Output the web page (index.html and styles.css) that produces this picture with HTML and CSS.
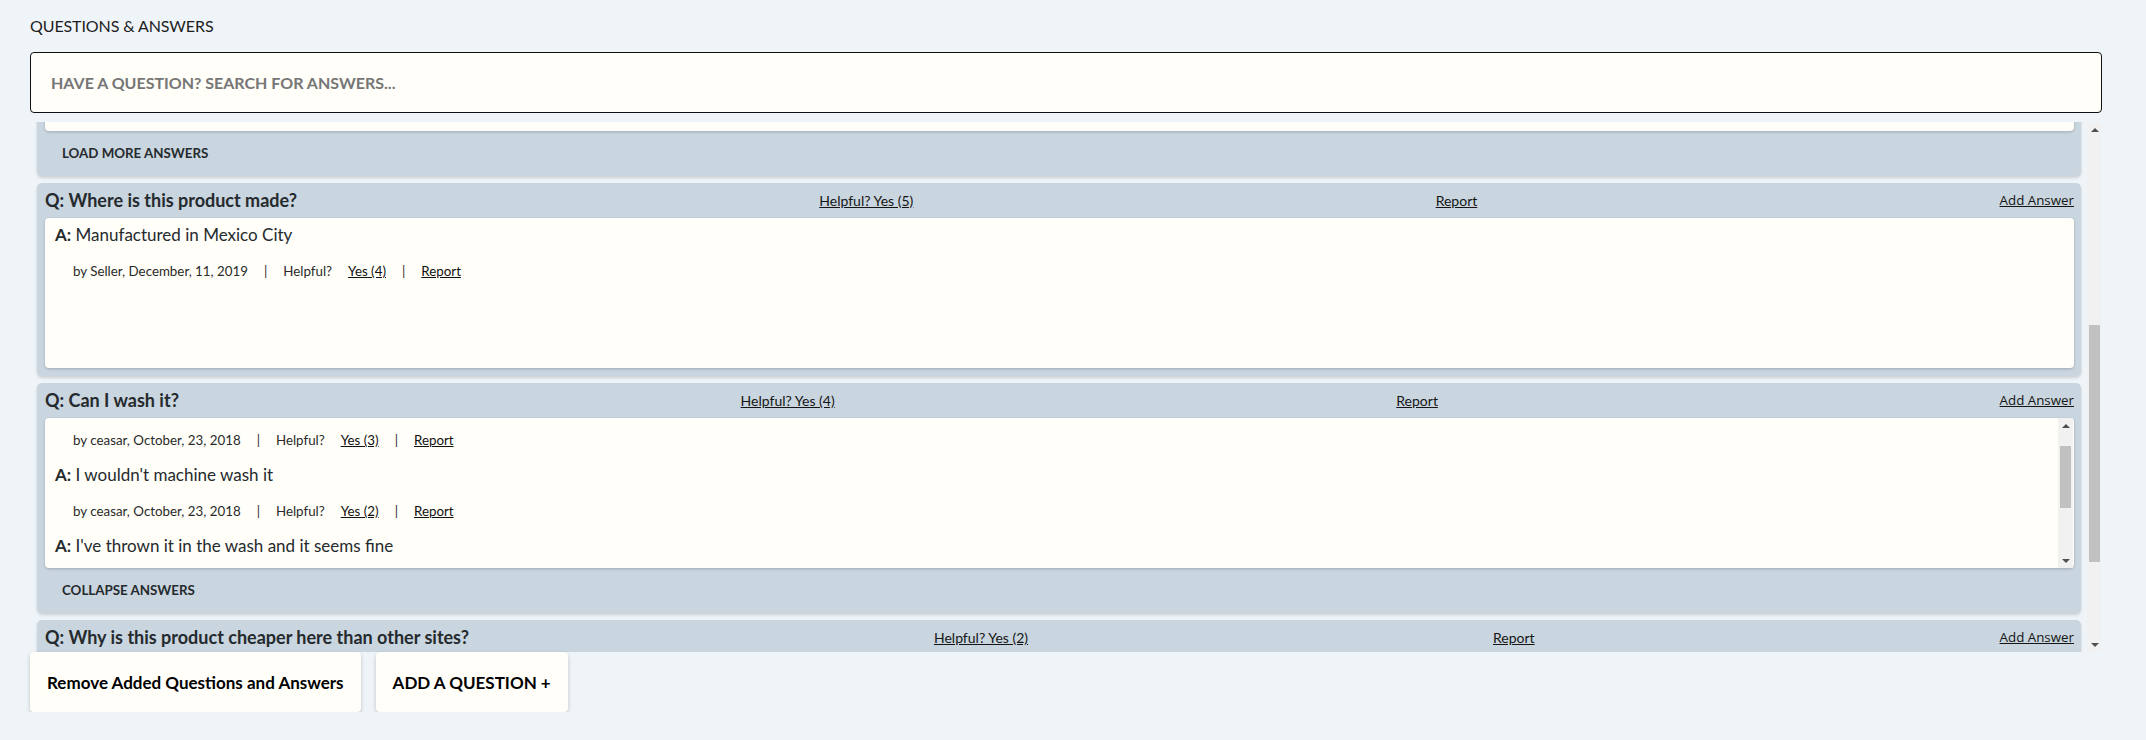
FILE: index.html
```html
<!DOCTYPE html>
<html>
<head>
    <meta charset="UTF-8">
    <title>Questions &amp; Answers</title>
    <link rel="stylesheet" href="styles.css">
</head>
<body>
    <div class="qa">
        <h2 class="qa-title">QUESTIONS &amp; ANSWERS</h2>
        <input class="qa-search" type="text" placeholder="HAVE A QUESTION? SEARCH FOR ANSWERS...">

        <div class="list-wrap">
            <div class="qa-list" id="qaList">
                <div class="question">
                    <div class="q-head">
                        <span class="q-text">Q: Does this run true to size?</span>
                        <a href="javascript:;" class="q-link">Helpful? Yes (9)</a>
                        <a href="javascript:;" class="q-link">Report</a>
                        <button class="add-answer">Add Answer</button>
                    </div>
                    <div class="answers">
                        <div class="answers-scroll">
                            <div class="answer">
                                <p class="a-body"><b>A:</b> Yes, I ordered my usual size and it fits well</p>
                                <div class="a-meta">
                                    <span>by dana, March, 2, 2019</span><span>|</span><span>Helpful?</span>
                                    <a href="javascript:;">Yes (6)</a><span>|</span><a href="javascript:;">Report</a>
                                </div>
                            </div>
                            <div class="answer">
                                <p class="a-body"><b>A:</b> It runs a little small around the shoulders</p>
                                <div class="a-meta">
                                    <span>by jon22, February, 14, 2019</span><span>|</span><span>Helpful?</span>
                                    <a href="javascript:;">Yes (3)</a><span>|</span><a href="javascript:;">Report</a>
                                </div>
                            </div>
                        </div>
                    </div>
                    <button class="more">LOAD MORE ANSWERS</button>
                </div>

                <div class="question">
                    <div class="q-head">
                        <span class="q-text">Q: How long does shipping take?</span>
                        <a href="javascript:;" class="q-link">Helpful? Yes (7)</a>
                        <a href="javascript:;" class="q-link">Report</a>
                        <button class="add-answer">Add Answer</button>
                    </div>
                    <div class="answers">
                        <div class="answers-scroll">
                            <div class="answer">
                                <p class="a-body"><b>A:</b> Mine arrived in three days</p>
                                <div class="a-meta">
                                    <span>by Seller, January, 8, 2019</span><span>|</span><span>Helpful?</span>
                                    <a href="javascript:;">Yes (5)</a><span>|</span><a href="javascript:;">Report</a>
                                </div>
                            </div>
                            <div class="answer">
                                <p class="a-body"><b>A:</b> About a week for me</p>
                                <div class="a-meta">
                                    <span>by mira, December, 30, 2018</span><span>|</span><span>Helpful?</span>
                                    <a href="javascript:;">Yes (1)</a><span>|</span><a href="javascript:;">Report</a>
                                </div>
                            </div>
                        </div>
                    </div>
                    <button class="more">LOAD MORE ANSWERS</button>
                </div>

                <div class="question">
                    <div class="q-head">
                        <span class="q-text">Q: Where is this product made?</span>
                        <a href="javascript:;" class="q-link">Helpful? Yes (5)</a>
                        <a href="javascript:;" class="q-link">Report</a>
                        <button class="add-answer">Add Answer</button>
                    </div>
                    <div class="answers">
                        <div class="answers-scroll">
                            <div class="answer">
                                <p class="a-body"><b>A:</b> Manufactured in Mexico City</p>
                                <div class="a-meta">
                                    <span>by Seller, December, 11, 2019</span><span>|</span><span>Helpful?</span>
                                    <a href="javascript:;">Yes (4)</a><span>|</span><a href="javascript:;">Report</a>
                                </div>
                            </div>
                        </div>
                    </div>
                </div>

                <div class="question">
                    <div class="q-head">
                        <span class="q-text">Q: Can I wash it?</span>
                        <a href="javascript:;" class="q-link">Helpful? Yes (4)</a>
                        <a href="javascript:;" class="q-link">Report</a>
                        <button class="add-answer">Add Answer</button>
                    </div>
                    <div class="answers">
                        <div class="answers-scroll" id="washAnswers">
                            <div class="answer">
                                <p class="a-body"><b>A:</b> Yes, cold water only</p>
                                <div class="a-meta">
                                    <span>by ceasar, October, 23, 2018</span><span>|</span><span>Helpful?</span>
                                    <a href="javascript:;">Yes (3)</a><span>|</span><a href="javascript:;">Report</a>
                                </div>
                            </div>
                            <div class="answer">
                                <p class="a-body"><b>A:</b> I wouldn't machine wash it</p>
                                <div class="a-meta">
                                    <span>by ceasar, October, 23, 2018</span><span>|</span><span>Helpful?</span>
                                    <a href="javascript:;">Yes (2)</a><span>|</span><a href="javascript:;">Report</a>
                                </div>
                            </div>
                            <div class="answer">
                                <p class="a-body"><b>A:</b> I've thrown it in the wash and it seems fine</p>
                                <div class="a-meta">
                                    <span>by ceasar, October, 23, 2018</span><span>|</span><span>Helpful?</span>
                                    <a href="javascript:;">Yes (1)</a><span>|</span><a href="javascript:;">Report</a>
                                </div>
                            </div>
                            <div class="answer">
                                <p class="a-body"><b>A:</b> Hand wash and hang it up to dry</p>
                                <div class="a-meta">
                                    <span>by ceasar, October, 23, 2018</span><span>|</span><span>Helpful?</span>
                                    <a href="javascript:;">Yes (0)</a><span>|</span><a href="javascript:;">Report</a>
                                </div>
                            </div>
                        </div>
                        <div class="scrollbar" id="washBar">
                            <span class="sb-btn up"></span>
                            <div class="sb-track"><div class="sb-thumb"></div></div>
                            <span class="sb-btn down"></span>
                        </div>
                    </div>
                    <button class="more">COLLAPSE ANSWERS</button>
                </div>

                <div class="question">
                    <div class="q-head">
                        <span class="q-text">Q: Why is this product cheaper here than other sites?</span>
                        <a href="javascript:;" class="q-link">Helpful? Yes (2)</a>
                        <a href="javascript:;" class="q-link">Report</a>
                        <button class="add-answer">Add Answer</button>
                    </div>
                    <div class="answers">
                        <div class="answers-scroll">
                            <div class="answer">
                                <p class="a-body"><b>A:</b> We are selling it at a discount this month</p>
                                <div class="a-meta">
                                    <span>by Seller, November, 2, 2018</span><span>|</span><span>Helpful?</span>
                                    <a href="javascript:;">Yes (2)</a><span>|</span><a href="javascript:;">Report</a>
                                </div>
                            </div>
                        </div>
                    </div>
                </div>
            </div>
            <div class="scrollbar" id="listBar">
                <span class="sb-btn up"></span>
                <div class="sb-track"><div class="sb-thumb"></div></div>
                <span class="sb-btn down"></span>
            </div>
        </div>

        <div class="qa-actions">
            <button class="action">Remove Added Questions and Answers</button>
            <button class="action">ADD A QUESTION +</button>
        </div>
    </div>
    <script src="script.js"></script>
</body>
</html>
```

FILE: styles.css
```css
* {
    margin: 0;
    padding: 0;
    box-sizing: border-box;
}
body {
    background-color: #eff4f9;
    font-family: Lato, "Noto Sans", sans-serif;
    color: #252a2e;
}
.qa {
    padding: 16px 44px 0 30px;
}
.qa-title {
    font-size: 16px;
    font-weight: normal;
    line-height: 20px;
    letter-spacing: -0.1px;
    color: #1d1d1d;
}
.qa-search {
    display: block;
    width: 100%;
    height: 61px;
    margin-top: 16px;
    padding: 0 20px;
    border: 1px solid #111;
    border-radius: 4px;
    background-color: #fffef8;
    font-family: Lato, "Noto Sans", sans-serif;
    font-size: 16px;
    font-weight: bold;
    outline: none;
}
.qa-search::placeholder {
    color: #767676;
}

/* list + its scrollbar */
.list-wrap {
    display: flex;
    height: 530px;
    margin-top: 9px;
}
.qa-list {
    flex: 1;
    padding: 0 6px 0 7px;
    overflow: hidden;
}
.scrollbar {
    display: flex;
    flex-direction: column;
    width: 15px;
    flex-shrink: 0;
    background-color: #f1f1f1;
}
.sb-btn {
    display: flex;
    align-items: center;
    justify-content: center;
    height: 15px;
    flex-shrink: 0;
}
.sb-btn::after {
    content: "";
    border-left: 4px solid transparent;
    border-right: 4px solid transparent;
}
.sb-btn.up::after {
    border-bottom: 4px solid #505050;
}
.sb-btn.down::after {
    border-top: 4px solid #505050;
}
.sb-track {
    flex: 1;
    padding: 0 2px;
}
.sb-thumb {
    background-color: #c1c1c1;
}

.question {
    margin: 7px 0;
    padding: 6px 7px 8px 8px;
    background-color: #c9d5df;
    border-radius: 5px;
    box-shadow: 0 2px 3px rgba(0, 0, 0, 0.15);
}
.q-head {
    display: flex;
    justify-content: space-between;
    align-items: center;
    height: 22px;
    margin-bottom: 7px;
}
.q-text {
    font-size: 18px;
    font-weight: bold;
    line-height: 22px;
}
.q-link {
    font-size: 14px;
    color: #151515;
}
.add-answer {
    border: none;
    background: none;
    font-family: "Open Sans", "Noto Sans", sans-serif;
    font-size: 13.333px;
    color: #151515;
    text-decoration: underline;
    cursor: pointer;
}
.answers {
    display: flex;
    height: 150px;
    padding-right: 1px;
    background-color: #fffef8;
    border-radius: 4px;
    box-shadow: 0 1px 3px rgba(0, 0, 0, 0.2);
}
.answers-scroll {
    flex: 1;
    padding: 6px 10px 0;
    overflow: hidden;
}
.answer {
    padding-bottom: 16px;
}
.a-body {
    font-size: 17px;
    line-height: 22px;
}
.a-meta {
    display: flex;
    gap: 16px;
    margin-top: 17px;
    padding-left: 18px;
    font-size: 13.333px;
    line-height: 16px;
    color: #2a2a2a;
}
.a-meta a {
    color: #111;
}
.more {
    display: block;
    padding: 14px 17px 7px;
    border: none;
    background: none;
    font-family: Lato, "Noto Sans", sans-serif;
    font-size: 13.333px;
    font-weight: bold;
    line-height: 16px;
    color: #252a2e;
    cursor: pointer;
}
.qa-actions {
    display: flex;
    gap: 15px;
}
.action {
    height: 60px;
    padding: 0 17px;
    border: none;
    border-radius: 4px;
    background-color: #fffef8;
    box-shadow: 0 2px 4px rgba(0, 0, 0, 0.2);
    font-family: Lato, "Noto Sans", sans-serif;
    font-size: 17px;
    font-weight: bold;
    color: #000;
    cursor: pointer;
}
```

FILE: script.js
```js
// size the thumb from how much of the box is visible
function fitBar(box, bar) {
    var track = bar.querySelector('.sb-track');
    var thumb = bar.querySelector('.sb-thumb');
    var h = track.clientHeight;
    thumb.style.height = Math.round(box.clientHeight / box.scrollHeight * h) + 'px';
    thumb.style.marginTop = Math.round(box.scrollTop / box.scrollHeight * h) + 'px';
}

var list = document.getElementById('qaList');
var wash = document.getElementById('washAnswers');

list.scrollTop = 420;
wash.scrollTop = 31;

fitBar(list, document.getElementById('listBar'));
fitBar(wash, document.getElementById('washBar'));
```
